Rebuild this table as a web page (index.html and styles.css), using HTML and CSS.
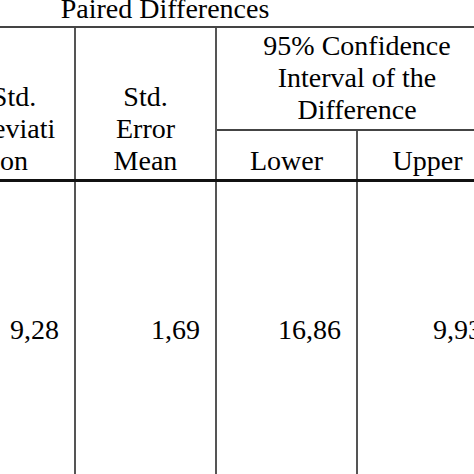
FILE: index.html
```html
<!DOCTYPE html>
<html lang="en">
<head>
    <meta charset="UTF-8">
    <meta name="viewport" content="width=device-width, initial-scale=1.0">
    <title>Paired Samples Test</title>
    <link rel="stylesheet" href="styles.css">
</head>
<body>

    <!-- cropped part of an SPSS paired samples table -->
    <div class="crop">
        <table class="stats">
            <colgroup>
                <col class="col-mean">
                <col class="col-dev">
                <col class="col-std">
                <col class="col-std">
                <col class="col-std">
            </colgroup>
            <tr>
                <th colspan="5" class="group-title">Paired Differences</th>
            </tr>
            <tr>
                <th rowspan="2" class="head-bottom">Mean</th>
                <th rowspan="2" class="head-bottom">Std.<br>Deviati<br>on</th>
                <th rowspan="2" class="head-bottom">Std.<br>Error<br>Mean</th>
                <th colspan="2" class="ci-title">95% Confidence<br>Interval of the<br>Difference</th>
            </tr>
            <tr>
                <th class="head-bottom sub">Lower</th>
                <th class="head-bottom sub">Upper</th>
            </tr>
            <tr class="data-row">
                <td>-6,47</td>
                <td>9,28</td>
                <td>1,69</td>
                <td>16,86</td>
                <td>9,93</td>
            </tr>
        </table>
    </div>

</body>
</html>
```

FILE: styles.css
```css
      body {
          margin: 0;
          background: #fff;
          overflow: hidden;
      }

      /* the screenshot only shows the right part of the table */
      .crop {
          width: 474px;
          height: 474px;
          overflow: hidden;
      }

      .stats {
          margin-left: -169px;
          margin-top: -7px;
          border-collapse: collapse;
          table-layout: fixed;
          width: 666px;
          font-family: "Liberation Serif", "Times New Roman", serif;
          font-size: 28px;
          line-height: 32px;
          color: #000;
      }
      .col-mean {
          width: 121px;
      }
      .col-dev {
          width: 122px;
      }
      .col-std {
          width: 141px;
      }

      .stats th {
          font-weight: normal;
          text-align: center;
          padding: 0;
          border-left: 2px solid #555;
          border-right: 2px solid #555;
      }
      .stats th.group-title {
          border-left: none;
          border-right: none;
          border-bottom: 2px solid #444;
          padding-bottom: 2px;
          line-height: 31px;
      }
      .head-bottom {
          vertical-align: bottom;
          padding-bottom: 2px !important;
      }
      .stats .head-bottom {
          border-bottom: 3px solid #111;
      }
      .ci-title {
          padding: 2px 0 3px !important;
          border-bottom: 2px solid #444;
      }
      .sub {
          padding-top: 14px !important;
      }

      .data-row td {
          height: 295px;
          vertical-align: middle;
          text-align: right;
          padding: 0 15px 0 0;
          border-left: 2px solid #555;
          border-right: 2px solid #555;
      }
```
